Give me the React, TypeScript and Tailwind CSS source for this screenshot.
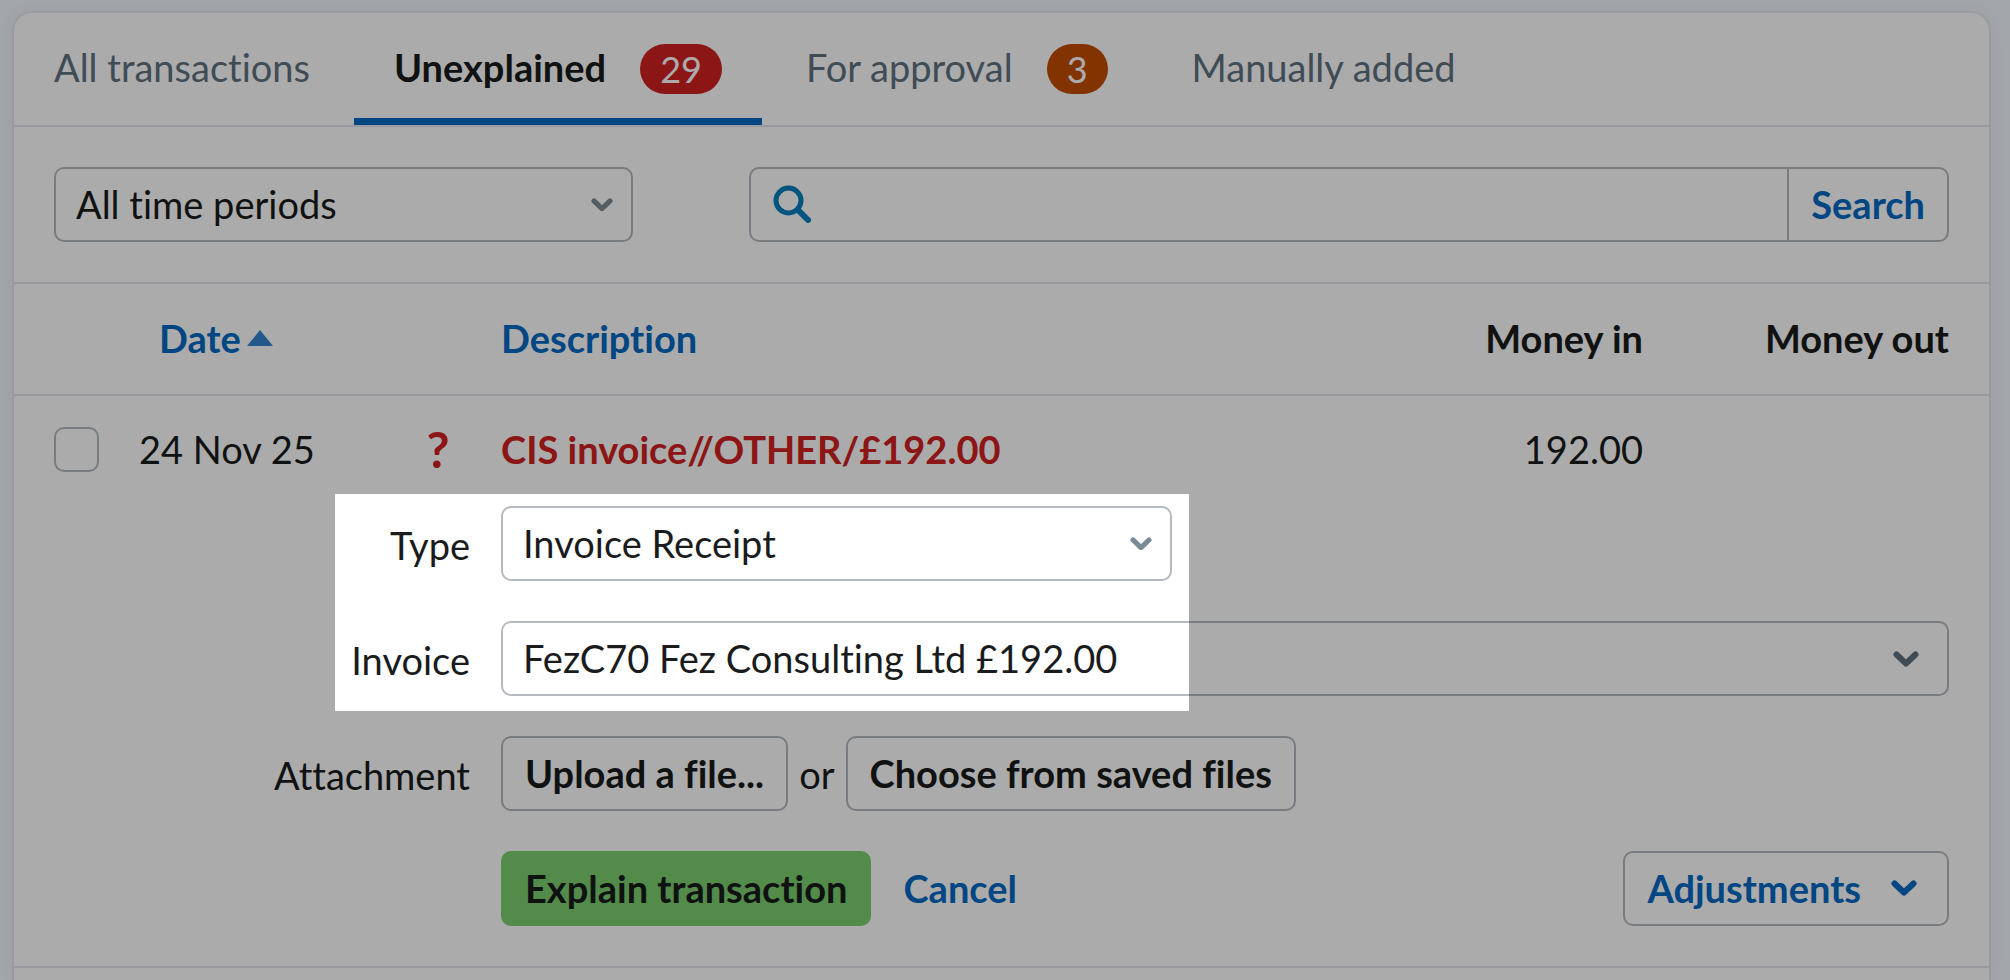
import { useState } from "react";
import clsx from "clsx";

const tabs = [
  { id: "all", label: "All transactions" },
  { id: "unexplained", label: "Unexplained", count: 29, badge: "bg-[#d12020]" },
  { id: "approval", label: "For approval", count: 3, badge: "bg-[#c34d00]" },
  { id: "manual", label: "Manually added" },
];

const control = "h-[75px] rounded-[10px] border-2 border-[#b4bac0] bg-white";
const button = `${control} px-[22px] pb-0.5 font-bold`;

function Chevron({ className }: { className?: string }) {
  return (
    <svg
      viewBox="0 0 26 16"
      fill="none"
      stroke="currentColor"
      strokeWidth="6"
      strokeLinecap="round"
      strokeLinejoin="round"
      aria-hidden="true"
      className={className}
    >
      <path d="M3.5 3.500 13 12.500l9.500-9" />
    </svg>
  );
}

function SearchIcon() {
  return (
    <svg
      viewBox="0 0 38 38"
      fill="none"
      stroke="currentColor"
      strokeWidth="5"
      strokeLinecap="round"
      aria-hidden="true"
      className="size-[38px] shrink-0 text-[#007ebf]"
    >
      <circle cx="15.500" cy="15.500" r="12.500" />
      <path d="m25 25 10 10" strokeWidth="6" />
    </svg>
  );
}

function Select({
  id,
  label,
  options,
  className,
  chevron,
}: {
  id: string;
  label?: string;
  options: string[];
  className: string;
  chevron: string;
}) {
  return (
    <div className={clsx("relative", className)}>
      <select
        id={id}
        aria-label={label}
        className={clsx(control, "w-full appearance-none pb-0.5 pl-5 pr-20")}
      >
        {options.map((option) => (
          <option key={option}>{option}</option>
        ))}
      </select>
      <Chevron
        className={clsx("pointer-events-none absolute inset-y-0 my-auto", chevron)}
      />
    </div>
  );
}

const App = () => {
  const [activeTab, setActiveTab] = useState("unexplained");

  return (
    <main className="flex min-h-screen flex-col overflow-hidden bg-[#f4f8fc] pl-3 pr-[19px] pt-[11px] font-['Lato',sans-serif] text-[38px]/[46px] text-[#191b1c] [font-variant-ligatures:none]">
      <div className="flex-1 rounded-t-[20px] border-2 border-b-0 border-[#e4e8ee] bg-white shadow-[0_0_20px_#e4eefa]">
        <nav className="flex h-[114px] gap-1 border-b-2 border-[#e5e5ee]">
          {tabs.map((tab) => (
            <button
              key={tab.id}
              type="button"
              onClick={() => setActiveTab(tab.id)}
              className={clsx(
                "flex items-center gap-[34px] px-10",
                activeTab === tab.id
                  ? "font-bold shadow-[inset_0_-7px_#0069c4]"
                  : "text-[#5f727f]"
              )}
            >
              <span className="pb-1">{tab.label}</span>
              {tab.count && (
                <span
                  className={clsx(
                    "flex h-[50px] items-center rounded-full px-5 text-[36px] font-normal text-white",
                    tab.badge
                  )}
                >
                  {tab.count}
                </span>
              )}
            </button>
          ))}
        </nav>

        <div className="flex items-center justify-between gap-[116px] border-b-2 border-[#e5e5ee] p-10">
          <Select
            id="period"
            label="Time period"
            options={["All time periods", "This month", "Last month"]}
            className="w-[579px]"
            chevron="right-5 w-[22px] text-[#7b8b96]"
          />
          <form
            className={clsx(control, "flex flex-1 items-center")}
            onSubmit={(e) => e.preventDefault()}
          >
            <label htmlFor="search" className="pb-0.5 pl-[22px]">
              <SearchIcon />
            </label>
            <input
              id="search"
              type="search"
              aria-label="Search transactions"
              className="h-full min-w-0 flex-1 px-5 outline-none"
            />
            <button
              type="submit"
              className="h-full border-l-2 border-[#b4bac0] px-[22px] pb-0.5 font-bold text-[#0069c4]"
            >
              Search
            </button>
          </form>
        </div>

        <table className="w-full table-fixed border-separate border-spacing-0">
          <colgroup>
            <col className="w-[125px]" />
            <col className="w-[236px]" />
            <col className="w-[126px]" />
            <col />
            <col className="w-[260px]" />
            <col className="w-[346px]" />
          </colgroup>
          <thead>
            <tr className="h-[112px] *:border-b-2 *:border-[#e5e5ee] *:p-0 *:pb-0.5 *:font-bold">
              <td />
              <th className="text-left">
                <a
                  href="#date"
                  className="ml-5 inline-flex items-center gap-1.5 text-[#0069c4]"
                >
                  Date
                  <svg viewBox="0 0 26 16" className="w-[26px]" aria-hidden="true">
                    <path d="M13 0 26 16H0z" fill="#3484d0" />
                  </svg>
                </a>
              </th>
              <td />
              <th className="text-left">
                <a href="#description" className="text-[#0069c4]">
                  Description
                </a>
              </th>
              <th className="text-right">Money in</th>
              <th className="text-right">
                <span className="pr-10">Money out</span>
              </th>
            </tr>
          </thead>
          <tbody>
            <tr className="h-[110px] *:p-0 *:pb-1">
              <td>
                <input
                  type="checkbox"
                  aria-label="Select transaction"
                  className="ml-10 block size-[45px] appearance-none rounded-[10px] border-2 border-[#b4bac0] bg-white"
                />
              </td>
              <td>24 Nov 25</td>
              <td className="text-center text-[50px] font-bold text-[#d12020]">?</td>
              <td>
                <a href="#transaction" className="font-bold text-[#d12020]">
                  CIS invoice//OTHER/£192.00
                </a>
              </td>
              <td className="text-right">192.00</td>
              <td />
            </tr>
            <tr>
              <td colSpan={6} className="border-b-2 border-[#e5e5ee] p-0">
                <form
                  className="relative grid grid-cols-[456px_1fr] items-center gap-x-[31px] gap-y-10 pb-10 pr-10"
                  onSubmit={(e) => e.preventDefault()}
                >
                  <label htmlFor="type" className="pt-0.5 text-right">
                    Type
                  </label>
                  <Select
                    id="type"
                    options={["Invoice Receipt", "Sales", "Refund"]}
                    className="w-[671px]"
                    chevron="right-5 w-[22px] text-[#7b8b96]"
                  />

                  <label htmlFor="invoice" className="pt-0.5 text-right">
                    Invoice
                  </label>
                  <Select
                    id="invoice"
                    options={["FezC70 Fez Consulting Ltd £192.00"]}
                    className="w-full"
                    chevron="right-[30px] w-[26px] text-[#5f727f]"
                  />

                  <label htmlFor="upload" className="pt-0.5 text-right">
                    Attachment
                  </label>
                  <div className="flex items-center gap-[11px]">
                    <button id="upload" type="button" className={button}>
                      Upload a file...
                    </button>
                    or
                    <button type="button" className={button}>
                      Choose from saved files
                    </button>
                  </div>

                  <div className="col-start-2 flex items-center">
                    <button
                      type="submit"
                      className="h-[75px] rounded-[10px] bg-[#7bcf6f] px-6 pb-0.5 font-bold"
                    >
                      Explain transaction
                    </button>
                    <a href="#cancel" className="ml-8 pb-0.5 font-bold text-[#0069c4]">
                      Cancel
                    </a>
                    <button
                      type="button"
                      className={clsx(
                        button,
                        "ml-auto flex items-center gap-[30px] pr-[30px] text-[#0069c4]"
                      )}
                    >
                      Adjustments
                      <Chevron className="w-[26px]" />
                    </button>
                  </div>

                  {/* spotlight: dims everything around the two fields */}
                  <div className="pointer-events-none absolute -top-3 left-[321px] h-[217px] w-[854px] shadow-[0_0_0_3000px_rgba(0,0,0,0.33)]" />
                </form>
              </td>
            </tr>
          </tbody>
        </table>
      </div>
    </main>
  );
};

export default App;
